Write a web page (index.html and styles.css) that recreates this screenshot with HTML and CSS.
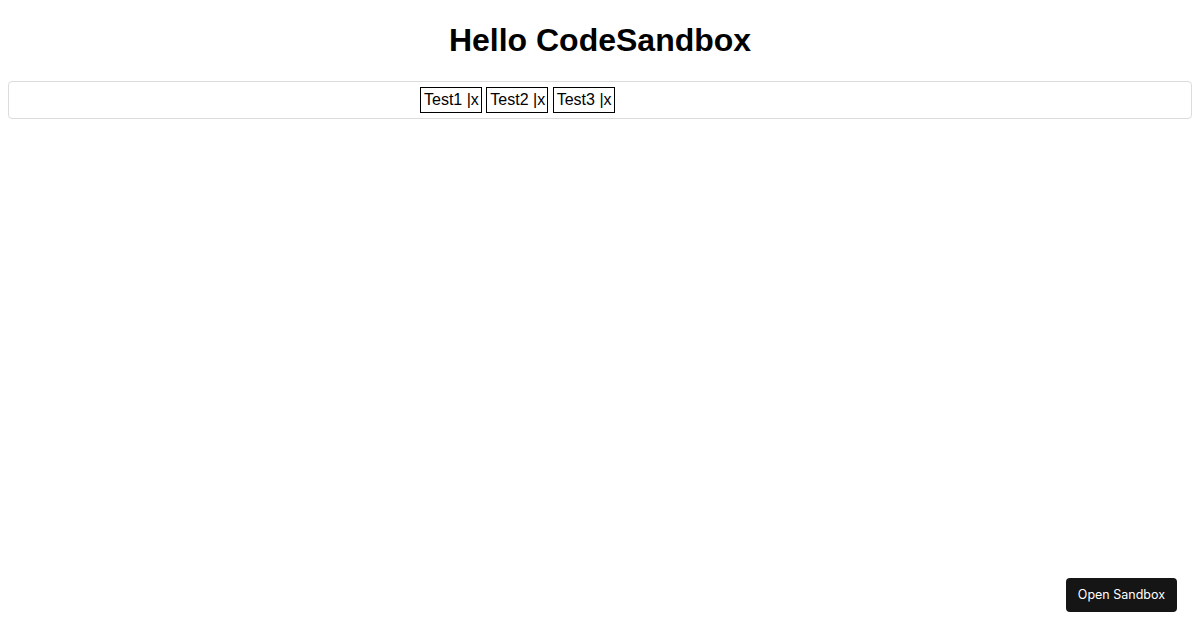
FILE: index.html
```html
<!DOCTYPE html>
<html>
<head>
<meta charset="utf-8">
<link rel="stylesheet" href="styles.css">
</head>
<body>
<div class="app">
  <h1 class="title">Hello CodeSandbox</h1>
  <div class="tag-input">
    <div class="tags">
      <span class="tag">Test1 |x</span>
      <span class="tag">Test2 |x</span>
      <span class="tag">Test3 |x</span>
    </div>
  </div>
</div>
<a class="open-sandbox">Open Sandbox</a>
</body>
</html>
```
FILE: styles.css
```css
html, body {
  background: #fff;
}
body {
  margin: 8px;
  font-family: "Liberation Sans", Arial, sans-serif;
  color: #000;
}
.app {
  text-align: center;
}
.title {
  font-size: 32px;
  font-weight: bold;
  margin: 14.44px 0 22px;
}
.tag-input {
  border: 1px solid #dcdcdc;
  border-radius: 4px;
  padding: 5px 0 5px 411px;
  text-align: left;
}
.tags {
  display: flex;
  gap: 5px;
}
.tag {
  border: 1px solid #000;
  padding: 2px 2px 2px 3px;
  font-size: 16px;
  line-height: 20px;
}
.tag + .tag {
  margin-left: -0.5px;
}
.open-sandbox {
  position: fixed;
  right: 23px;
  bottom: 18px;
  background: #151515;
  color: #fff;
  font-family: Inter, "Liberation Sans", sans-serif;
  font-size: 12.5px;
  border-radius: 4px;
  padding: 0 12px;
  height: 34px;
  line-height: 34px;
  white-space: nowrap;
  text-align: center;
}
```
